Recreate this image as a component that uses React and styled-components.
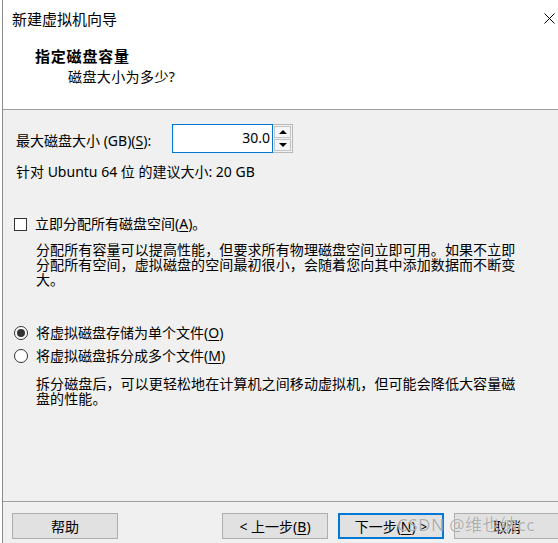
import React from 'react';
import styled, { createGlobalStyle } from 'styled-components';

const FONT = `"Segoe UI", "Noto Sans", "Noto Sans CJK SC", sans-serif`;

const App = () => {
  return (
    <>
      <GlobalStyle />
      <S.Window>
        <S.Header>
          <S.TitleBar>
            <S.Title>新建虚拟机向导</S.Title>
            <S.CloseBtn aria-label="关闭">
              <svg width="11" height="11" viewBox="0 0 11 11">
                <path d="M0.5 0.5 L10.5 10.5 M10.5 0.5 L0.5 10.5" stroke="#000" strokeWidth="1" />
              </svg>
            </S.CloseBtn>
          </S.TitleBar>
          <S.Heading>指定磁盘容量</S.Heading>
          <S.SubHeading>磁盘大小为多少?</S.SubHeading>
        </S.Header>

        <S.Body>
          <S.SizeRow>
            <S.SizeLabel>
              最大磁盘大小 (GB)(<S.Key>S</S.Key>):
            </S.SizeLabel>
            <S.NumberInput readOnly value="30.0" />
            <S.Spinner>
              <S.SpinBtn>
                <S.Arrow $dir="up" />
              </S.SpinBtn>
              <S.SpinBtn>
                <S.Arrow $dir="down" />
              </S.SpinBtn>
            </S.Spinner>
          </S.SizeRow>
          <S.Hint>针对 Ubuntu 64 位 的建议大小: 20 GB</S.Hint>

          <S.OptionRow $top={32}>
            <S.Checkbox />
            <span>
              立即分配所有磁盘空间(<S.Key>A</S.Key>)。
            </span>
          </S.OptionRow>
          <S.Note>
            分配所有容量可以提高性能，但要求所有物理磁盘空间立即可用。如果不立即分配所有空间，虚拟磁盘的空间最初很小，会随着您向其中添加数据而不断变大。
          </S.Note>

          <S.OptionRow $top={36}>
            <S.Radio $checked />
            <span>
              将虚拟磁盘存储为单个文件(<S.Key>O</S.Key>)
            </span>
          </S.OptionRow>
          <S.OptionRow $top={3}>
            <S.Radio />
            <span>
              将虚拟磁盘拆分成多个文件(<S.Key>M</S.Key>)
            </span>
          </S.OptionRow>
          <S.Note $top={10}>
            拆分磁盘后，可以更轻松地在计算机之间移动虚拟机，但可能会降低大容量磁盘的性能。
          </S.Note>
        </S.Body>

        <S.Footer>
          <S.Button>帮助</S.Button>
          <S.ButtonGroup>
            <S.Button>
              &lt; 上一步(<S.Key>B</S.Key>)
            </S.Button>
            <S.Button $primary>
              下一步(<S.Key>N</S.Key>) &gt;
            </S.Button>
            <S.Button>取消</S.Button>
          </S.ButtonGroup>
          <S.Watermark>CSDN @维也纳cc</S.Watermark>
        </S.Footer>
      </S.Window>
    </>
  );
};
export default App;

const GlobalStyle = createGlobalStyle`
  html, body {
    margin: 0;
    padding: 0;
    background: #fff;
    overflow: hidden;
  }
  body {
    font-family: ${FONT};
    font-size: 14px;
    color: #000;
  }
  * {
    box-sizing: border-box;
  }
`;

const S = {
  Window: styled.div`
    position: relative;
    display: flex;
    flex-direction: column;
    width: 556px;
    height: 543px;
    margin-left: 2px;
    border-left: 1px solid #8a8a8a;
    background-color: #f0f0f0;
    overflow: hidden;
  `,

  Header: styled.header`
    height: 110px;
    border-bottom: 1px solid #a0a0a0;
    background-color: #fff;
  `,

  TitleBar: styled.div`
    display: flex;
    justify-content: space-between;
    align-items: center;
    height: 38px;
    padding: 0 3px 0 9px;
  `,

  Title: styled.span`
    font-size: 15px;
    line-height: 20px;
  `,

  CloseBtn: styled.span`
    display: flex;
    width: 11px;
    height: 11px;
    margin-top: -1px;
  `,

  Heading: styled.h1`
    margin: 8px 0 0 32px;
    font-size: 15px;
    font-weight: 700;
    line-height: 20px;
    letter-spacing: 0.8px;
  `,

  SubHeading: styled.p`
    margin: 1px 0 0 65px;
    font-size: 14px;
    line-height: 20px;
    letter-spacing: 0.4px;
  `,

  Body: styled.main`
    flex: 1;
    padding-left: 13px;
  `,

  SizeRow: styled.div`
    display: flex;
    align-items: center;
    height: 29px;
    margin-top: 14px;
  `,

  SizeLabel: styled.label`
    width: 156px;
    padding-top: 4px;
    line-height: 20px;
  `,

  NumberInput: styled.input`
    width: 101px;
    height: 29px;
    padding: 0 2px 2px 0;
    border: 1px solid #0078d7;
    outline: none;
    background-color: #fff;
    font-family: ${FONT};
    font-size: 14px;
    text-align: right;
    color: #000;
  `,

  Spinner: styled.div`
    display: flex;
    flex-direction: column;
    justify-content: center;
    gap: 1px;
    width: 20px;
    height: 29px;
    padding: 1px;
    border: 1px solid #b8b8b8;
    border-left: none;
    background-color: #f0f0f0;
  `,

  SpinBtn: styled.div`
    display: flex;
    justify-content: center;
    align-items: center;
    height: 12px;
    border: 1px solid #c4c4c4;
    background-color: #f5f5f5;
  `,

  Arrow: styled.span`
    width: 0;
    height: 0;
    border-left: 4px solid transparent;
    border-right: 4px solid transparent;
    ${({ $dir }) =>
      $dir === 'up' ? 'border-bottom: 4px solid #000;' : 'border-top: 4px solid #000;'}
  `,

  Hint: styled.p`
    margin: 9px 0 0;
    line-height: 20px;
  `,

  OptionRow: styled.div`
    display: flex;
    align-items: center;
    gap: 8px;
    margin-top: ${({ $top }) => $top}px;
    margin-left: -2px;
    line-height: 20px;
  `,

  Checkbox: styled.span`
    width: 13px;
    height: 13px;
    border: 1px solid #333;
    background-color: #fff;
  `,

  Radio: styled.span`
    display: flex;
    justify-content: center;
    align-items: center;
    width: 14px;
    height: 14px;
    border: 1px solid #333;
    border-radius: 50%;
    background-color: #fff;

    &::after {
      content: '';
      display: ${({ $checked }) => ($checked ? 'block' : 'none')};
      width: 8px;
      height: 8px;
      border-radius: 50%;
      background-color: #333;
    }
  `,

  Note: styled.p`
    max-width: 484px;
    margin: ${({ $top = 8 }) => $top}px 0 0 20px;
    line-height: 15px;
    letter-spacing: 0.1px;
  `,

  Key: styled.u`
    text-underline-offset: 2px;
  `,

  Footer: styled.footer`
    position: relative;
    display: flex;
    height: 42px;
    padding: 11px 0 0 9px;
    border-top: 1px solid #a0a0a0;
  `,

  ButtonGroup: styled.div`
    display: flex;
    gap: 10px;
    margin-left: auto;
    margin-right: -2px;
  `,

  Button: styled.button`
    width: 106px;
    height: 26px;
    padding: 0 0 1px;
    border: ${({ $primary }) => ($primary ? '2px solid #0078d7' : '1px solid #adadad')};
    background-color: #e1e1e1;
    font-family: ${FONT};
    font-size: 14px;
    color: #000;
  `,

  Watermark: styled.span`
    position: absolute;
    z-index: 1;
    left: 394px;
    top: 12px;
    font-size: 17px;
    line-height: 22px;
    letter-spacing: 0.5px;
    color: rgba(110, 110, 110, 0.55);
    text-shadow: 0 0 1px #fff;
    pointer-events: none;
  `,
};
